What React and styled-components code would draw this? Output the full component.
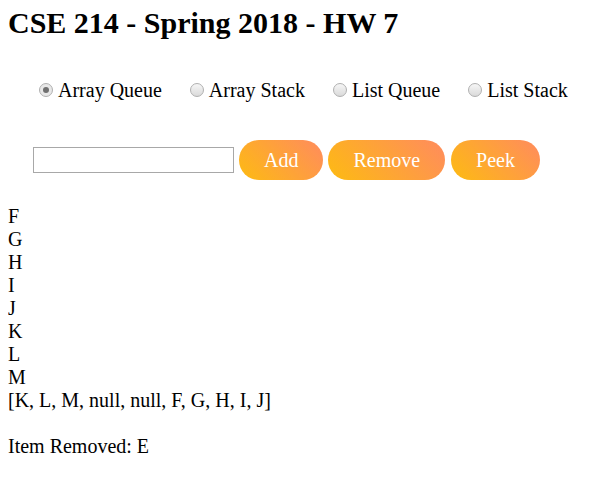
import React, { useState } from "react";
import styled, { createGlobalStyle } from "styled-components";

const GlobalStyle = createGlobalStyle`
  body {
    margin: 6px 8px;
    background: #fff;
    color: #000;
    font-family: "Liberation Serif", "Times New Roman", serif;
    font-size: 20px;
  }
`;

const Title = styled.h1`
  margin: 0;
  font-size: 30px;
  font-weight: bold;
  line-height: 33px;
`;

const RadioRow = styled.div`
  display: flex;
  align-items: center;
  gap: 28px;
  margin-top: 40px;
  padding-left: 31px;
  height: 23px;
`;

const RadioLabel = styled.label`
  display: flex;
  align-items: center;
  cursor: pointer;
  white-space: nowrap;
`;

const Radio = styled.input`
  appearance: none;
  margin: 0 5px 0 0;
  width: 14px;
  height: 14px;
  border-radius: 50%;
  border: 1px solid #b0b0b0;
  background: linear-gradient(#f6f6f6, #dadada);
  position: relative;
  top: -1px;

  &:checked {
    background: #e8e8e8;
  }
  &:checked::after {
    content: "";
    position: absolute;
    left: 3px;
    top: 3px;
    width: 6px;
    height: 6px;
    border-radius: 50%;
    background: #707070;
  }
`;

const ControlRow = styled.div`
  display: flex;
  align-items: center;
  margin-top: 38px;
  padding-left: 25px;
  height: 40px;
`;

const TextBox = styled.input`
  box-sizing: border-box;
  width: 201px;
  height: 26px;
  margin: 0 5px 0 0;
  border: 1px solid #a8a8a8;
  font-family: inherit;
  font-size: 16px;
  padding: 2px 4px;
  outline: none;
`;

const Button = styled.button`
  height: 40px;
  padding: 0 25px;
  margin-right: ${(p) => p.$gap || 5}px;
  border: none;
  border-radius: 20px;
  background: linear-gradient(45deg, #fdbb12 0%, #ff8b5e 100%);
  color: #fff;
  font-family: inherit;
  font-size: 20px;
  cursor: pointer;
`;

const Output = styled.div`
  margin-top: 25px;
  line-height: 23px;
`;

const Line = styled.div`
  min-height: 23px;
`;

const items = ["F", "G", "H", "I", "J", "K", "L", "M"];
const kinds = ["Array Queue", "Array Stack", "List Queue", "List Stack"];

export default function App() {
  const [kind, setKind] = useState("Array Queue");
  const [value, setValue] = useState("");

  return (
    <>
      <GlobalStyle />
      <Title>CSE 214 - Spring 2018 - HW 7</Title>
      <RadioRow>
        {kinds.map((k) => (
          <RadioLabel key={k}>
            <Radio
              type="radio"
              name="kind"
              checked={kind === k}
              onChange={() => setKind(k)}
            />
            {k}
          </RadioLabel>
        ))}
      </RadioRow>
      <ControlRow>
        <TextBox value={value} onChange={(e) => setValue(e.target.value)} />
        <Button>Add</Button>
        <Button $gap={6}>Remove</Button>
        <Button>Peek</Button>
      </ControlRow>
      <Output>
        {items.map((i) => (
          <Line key={i}>{i}</Line>
        ))}
        <Line>[K, L, M, null, null, F, G, H, I, J]</Line>
        <Line />
        <Line>Item Removed: E</Line>
      </Output>
    </>
  );
}
